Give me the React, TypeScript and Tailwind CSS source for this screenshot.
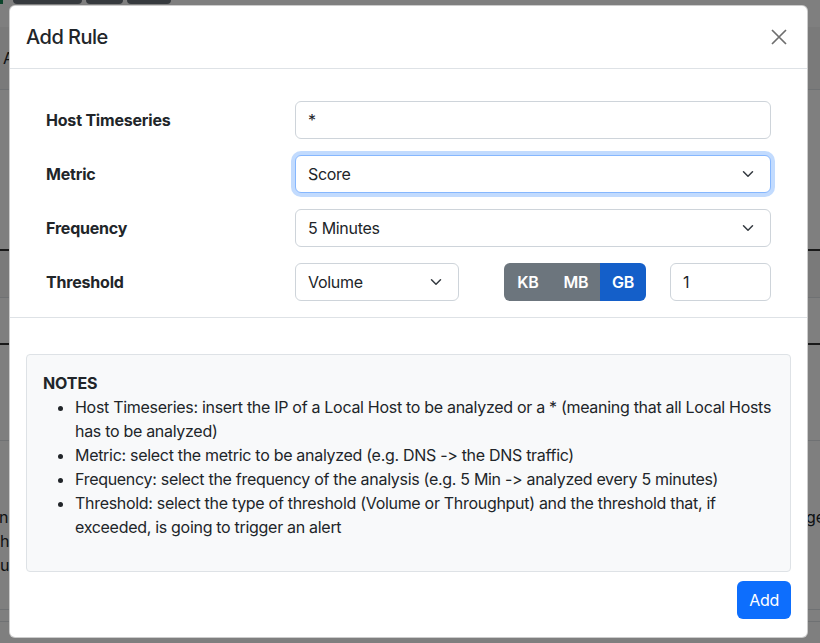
const FONT = {
  fontFamily: 'Inter, "Noto Sans", "Liberation Sans", sans-serif',
  fontFeatureSettings: '"calt" 0, "liga" 0',
};

function Chevron() {
  return (
    <svg className="pointer-events-none absolute right-[14px] top-1/2 h-[12px] w-[16px] -translate-y-1/2" viewBox="0 0 16 16" fill="none">
      <path d="m2 5 6 6 6-6" stroke="#343a40" strokeWidth="2" strokeLinecap="round" strokeLinejoin="round" />
    </svg>
  );
}

function SelectBox({ value, focused, className }: { value: string; focused?: boolean; className?: string }) {
  return (
    <div
      className={
        'relative flex h-[38px] items-center rounded-[6px] border bg-white pl-3 pr-10 text-[16px] tracking-[-0.3px] text-[#212529] ' +
        (focused ? 'border-[#86b7fe] shadow-[0_0_0_4px_rgba(13,110,253,0.25)] ' : 'border-[#ced4da] ') +
        (className ?? '')
      }
    >
      {value}
      <Chevron />
    </div>
  );
}

function Row({ label, children, last }: { label: string; children: React.ReactNode; last?: boolean }) {
  return (
    <div className={'flex items-center px-[20px] ' + (last ? '' : 'mb-4')}>
      <div className="w-[249px] shrink-0 text-[16px] font-bold tracking-[-0.2px] text-[#212529]">{label}</div>
      <div className="flex flex-1 items-center">{children}</div>
    </div>
  );
}

// page behind the backdrop
function Background() {
  return (
    <div className="h-[643px] w-full overflow-hidden bg-white text-[16px] leading-[24px] text-[#212529]">
      <div className="flex h-[4px] gap-[4px]">
        <div className="w-[3px] bg-[#198754]" />
        <div className="ml-[6px] w-[69px] rounded-b-[4px] bg-[#6c757d]" />
        <div className="w-[37px] rounded-b-[4px] bg-[#6c757d]" />
        <div className="w-[44px] rounded-b-[4px] bg-[#6c757d]" />
      </div>
      <div className="mt-[23px] flex h-[63px] items-center border-b border-[#dee2e6] bg-[#f4f4f4] pl-[3px]">
        Alerts
      </div>
      <div className="h-[159px]" />
      <div className="h-[48px] border-t-2 border-[#333] bg-[#f4f4f4]" />
      <div className="h-[48px] border-t border-[#dee2e6] border-b-2 border-b-[#333]" />
      <div className="h-[96px] border-b border-[#dee2e6]" />
      <div className="h-[169px] border-b border-[#dee2e6] pt-[64px]">
        <div className="flex">
          <span className="-ml-[1px] whitespace-nowrap">ncy</span>
          <span className="flex-1" />
          <span className="w-[14px] shrink-0 overflow-hidden whitespace-nowrap">ge</span>
        </div>
        <div className="whitespace-nowrap">hat</div>
        <div className="whitespace-nowrap">ult</div>
      </div>
      <div className="h-[12px] border-b border-[#dee2e6]" />
    </div>
  );
}

export default function App() {
  const notes = [
    ['Host Timeseries: insert the IP of a Local Host to be analyzed or a * (meaning that all Local Hosts', 'has to be analyzed)'],
    ['Metric: select the metric to be analyzed (e.g. DNS -> the DNS traffic)'],
    ['Frequency: select the frequency of the analysis (e.g. 5 Min -> analyzed every 5 minutes)'],
    ['Threshold: select the type of threshold (Volume or Throughput) and the threshold that, if', 'exceeded, is going to trigger an alert'],
  ];

  return (
    <div className="relative h-[643px] w-[820px] overflow-hidden" style={FONT}>
      <Background />

      {/* backdrop + modal */}
      <div className="absolute inset-0 bg-black/50 pl-[9px] pt-[5px]">
        <div className="w-[799px] rounded-[6px] border border-black/20 bg-white">
          <div className="flex items-center justify-between border-b border-[#dee2e6] px-4 py-4">
            <h5 className="text-[20px] font-medium leading-[30px] tracking-[-0.5px] text-[#212529]">Add Rule</h5>
            <button className="flex h-[24px] w-[24px] items-center justify-center">
              <svg width="16" height="16" viewBox="0 0 16 16" fill="none">
                <path d="M1 1 15 15M15 1 1 15" stroke="#6e6e6e" strokeWidth="1.7" />
              </svg>
            </button>
          </div>

          <div className="border-b border-[#dee2e6] px-4 pb-[16px] pt-[32px]">
            <Row label="Host Timeseries">
              <div className="flex h-[38px] w-[476px] items-center rounded-[6px] border border-[#ced4da] px-3 text-[16px] text-[#212529]">*</div>
            </Row>
            <Row label="Metric">
              <SelectBox value="Score" focused className="w-[476px]" />
            </Row>
            <Row label="Frequency">
              <SelectBox value="5 Minutes" className="w-[476px]" />
            </Row>
            <Row label="Threshold" last>
              <SelectBox value="Volume" className="w-[164px]" />
              <div className="ml-[45px] flex h-[38px] overflow-hidden rounded-[6px] text-[16px] font-semibold tracking-[-0.2px] text-white">
                <div className="flex w-[48px] items-center justify-center bg-[#6c757d]">KB</div>
                <div className="flex w-[48px] items-center justify-center bg-[#6c757d]">MB</div>
                <div className="flex w-[46px] items-center justify-center bg-[#145fc9]">GB</div>
              </div>
              <div className="ml-[24px] flex h-[38px] w-[101px] items-center rounded-[6px] border border-[#ced4da] px-3 text-[16px] text-[#212529]">1</div>
            </Row>
          </div>

          <div className="px-4 pb-[18px] pt-[36px]">
            <div className="rounded-[4px] border border-[#dee2e6] bg-[#f8f9fa] p-4 text-[16px] leading-[24px] tracking-[-0.3px] text-[#212529]">
              <div className="font-bold tracking-[-0.1px]">NOTES</div>
              <ul className="mb-4 list-disc pl-8">
                {notes.map((lines, i) => (
                  <li key={i}>
                    {lines.map((l, j) => (
                      <span key={j} className="block whitespace-nowrap">{l}</span>
                    ))}
                  </li>
                ))}
              </ul>
            </div>
            <div className="mt-[9px] flex justify-end">
              <button className="h-[38px] rounded-[6px] bg-[#0d6efd] px-3 text-[16px] tracking-[-0.3px] text-white">Add</button>
            </div>
          </div>
        </div>
      </div>
    </div>
  );
}
